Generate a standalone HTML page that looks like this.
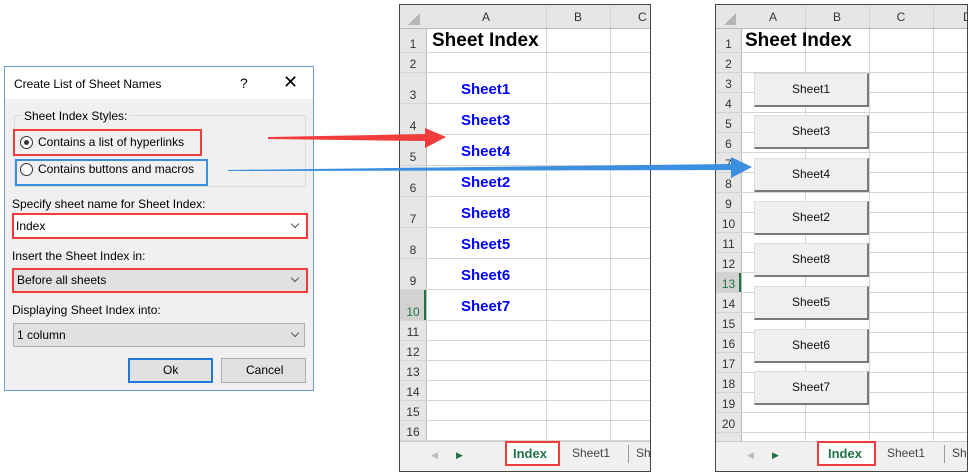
<!DOCTYPE html>
<html><head><meta charset="utf-8"><style>
*{margin:0;padding:0;box-sizing:border-box}
body{width:971px;height:476px;background:#fff;position:relative;overflow:hidden;font-family:"Liberation Sans",sans-serif}
.a{position:absolute}
.dlg{left:4px;top:66px;width:310px;height:325px;background:#f0f0f0;border:1px solid #6a9fd6}
.t{font-size:12px;color:#000;white-space:nowrap}
.red{border:2px solid #f03c3c}
.blue{border:2px solid #3b8ee0}
.chev{width:6px;height:6px;border-right:1px solid #555;border-bottom:1px solid #555;transform:rotate(45deg)}
.sheet{background:#fff;border:1px solid #444}
.hdr{background:#e6e6e6;color:#333;font-size:12px;text-align:center}
.gl{background:#d4d4d4}
.lnk{color:#0000ff;font-weight:bold;font-size:15px}
.btn{background:#efefef;border-right:2px solid #7a7a7a;border-bottom:2px solid #7a7a7a;border-top:1px solid #ddd;border-left:1px solid #ddd;font-size:12px;text-align:center;color:#111}
</style></head><body>

<!-- Dialog -->
<div class="a dlg">
 <div class="a" style="left:0;top:0;width:308px;height:32px;background:#fff"></div>
 <div class="a t" style="left:9px;top:10px;font-size:12px">Create List of Sheet Names</div>
 <div class="a t" style="left:235px;top:8px;font-size:14px">?</div>
 <div class="a t" style="left:278px;top:5px;font-size:18px">✕</div>
 <div class="a" style="left:9px;top:48px;width:292px;height:72px;border:1px solid #dcdcdc"></div>
 <div class="a t" style="left:17px;top:42px;background:#f0f0f0;padding:0 2px;font-size:12px">Sheet Index Styles:</div>
 <div class="a red" style="left:8px;top:62px;width:189px;height:27px"></div>
 <div class="a" style="left:15px;top:69px;width:13px;height:13px;border:1px solid #333;border-radius:50%;background:#fff"></div>
 <div class="a" style="left:19px;top:73px;width:5px;height:5px;border-radius:50%;background:#333"></div>
 <div class="a t" style="left:33px;top:68px">Contains a list of hyperlinks</div>
 <div class="a blue" style="left:10px;top:92px;width:193px;height:27px"></div>
 <div class="a" style="left:15px;top:96px;width:13px;height:13px;border:1px solid #333;border-radius:50%;background:#fff"></div>
 <div class="a t" style="left:33px;top:95px">Contains buttons and macros</div>
 <div class="a t" style="left:7px;top:130px">Specify sheet name for Sheet Index:</div>
 <div class="a red" style="left:7px;top:146px;width:296px;height:26px;background:#fff"></div>
 <div class="a t" style="left:11px;top:152px">Index</div>
 <div class="a chev" style="left:287px;top:154px"></div>
 <div class="a t" style="left:7px;top:182px">Insert the Sheet Index in:</div>
 <div class="a red" style="left:7px;top:201px;width:296px;height:25px;background:#e1e1e1"></div>
 <div class="a t" style="left:12px;top:206px">Before all sheets</div>
 <div class="a chev" style="left:287px;top:208px"></div>
 <div class="a t" style="left:7px;top:236px">Displaying Sheet Index into:</div>
 <div class="a" style="left:8px;top:256px;width:292px;height:24px;background:#e1e1e1;border:1px solid #adadad"></div>
 <div class="a t" style="left:12px;top:261px">1 column</div>
 <div class="a chev" style="left:287px;top:263px"></div>
 <div class="a" style="left:123px;top:291px;width:85px;height:25px;background:#e1e1e1;border:2px solid #1d7ad6"></div>
 <div class="a t" style="left:158px;top:296px">Ok</div>
 <div class="a" style="left:216px;top:291px;width:85px;height:25px;background:#e1e1e1;border:1px solid #adadad"></div>
 <div class="a t" style="left:241px;top:296px">Cancel</div>
</div>

<!-- Middle sheet -->
<div class="a sheet" style="left:399px;top:4px;width:252px;height:468px;overflow:hidden">
 <div class="a hdr" style="left:0;top:0;width:252px;height:24px"></div>
 <div class="a" style="left:8px;top:8px;width:0;height:0;border-left:12px solid transparent;border-bottom:12px solid #b5b5b5"></div>
 <div class="a hdr" style="left:26px;top:5px;width:120px">A</div>
 <div class="a hdr" style="left:146px;top:5px;width:64px">B</div>
 <div class="a hdr" style="left:210px;top:5px;width:42px;text-align:left;padding-left:28px">C</div>
 <div class="a" style="left:0;top:24px;width:26px;height:412px;background:#e6e6e6"></div>
 <div class="a" style="left:0;top:285px;width:26px;height:31px;background:#d2d2d2;border-right:2px solid #217346"></div>
 <div class="a" style="left:26px;top:24px;width:1px;height:412px;background:#bbb"></div>
 <div class="a gl" style="left:146px;top:0;width:1px;height:436px"></div>
 <div class="a gl" style="left:210px;top:0;width:1px;height:436px"></div>
 <div class="a" style="left:0;top:23px;width:252px;height:1px;background:#bbb"></div>
 <div id="m"></div>
 <div class="a t" style="left:32px;top:25px;font-size:19px;font-weight:bold">Sheet Index</div>
 <div class="a lnk" style="left:61px;top:76px">Sheet1</div>
 <div class="a lnk" style="left:61px;top:107px">Sheet3</div>
 <div class="a lnk" style="left:61px;top:138px">Sheet4</div>
 <div class="a lnk" style="left:61px;top:169px">Sheet2</div>
 <div class="a lnk" style="left:61px;top:200px">Sheet8</div>
 <div class="a lnk" style="left:61px;top:231px">Sheet5</div>
 <div class="a lnk" style="left:61px;top:262px">Sheet6</div>
 <div class="a lnk" style="left:61px;top:293px">Sheet7</div>
 <div class="a" style="left:0;top:436px;width:252px;height:32px;background:#f0f0f0;border-top:1px solid #ccc"></div>
 <div class="a t" style="left:31px;top:445px;color:#bbb;font-size:9px">◀</div>
 <div class="a t" style="left:56px;top:445px;color:#217346;font-size:9px">▶</div>
 <div class="a red" style="left:105px;top:436px;width:55px;height:25px;background:#fff"></div>
 <div class="a t" style="left:113px;top:441px;color:#217346;font-weight:bold;font-size:13px">Index</div>
 <div class="a t" style="left:172px;top:441px;color:#444;font-size:12px">Sheet1</div>
 <div class="a" style="left:228px;top:440px;width:1px;height:18px;background:#999"></div>
 <div class="a t" style="left:236px;top:441px;color:#444;font-size:12px">Sh</div>
</div>

<!-- Right sheet -->
<div class="a sheet" style="left:715px;top:4px;width:253px;height:468px;overflow:hidden">
 <div class="a" style="left:0;top:0;width:253px;height:24px;background:#e6e6e6"></div>
 <div class="a" style="left:8px;top:8px;width:0;height:0;border-left:12px solid transparent;border-bottom:12px solid #b5b5b5"></div>
 <div class="a hdr" style="left:25px;top:5px;width:64px">A</div>
 <div class="a hdr" style="left:89px;top:5px;width:64px">B</div>
 <div class="a hdr" style="left:153px;top:5px;width:64px">C</div>
 <div class="a hdr" style="left:217px;top:5px;width:36px;text-align:left;padding-left:30px">D</div>
 <div class="a" style="left:0;top:24px;width:25px;height:412px;background:#e6e6e6"></div>
 <div class="a" style="left:0;top:268px;width:25px;height:20px;background:#d2d2d2;border-right:2px solid #217346"></div>
 <div class="a" style="left:25px;top:24px;width:1px;height:412px;background:#bbb"></div>
 <div class="a gl" style="left:89px;top:0;width:1px;height:436px"></div>
 <div class="a gl" style="left:153px;top:0;width:1px;height:436px"></div>
 <div class="a gl" style="left:217px;top:0;width:1px;height:436px"></div>
 <div class="a" style="left:0;top:23px;width:253px;height:1px;background:#bbb"></div>
 <div id="r"></div>
 <div class="a t" style="left:29px;top:25px;font-size:19px;font-weight:bold">Sheet Index</div>
 <div class="a" style="left:0;top:436px;width:253px;height:32px;background:#f0f0f0;border-top:1px solid #ccc"></div>
 <div class="a t" style="left:31px;top:445px;color:#bbb;font-size:9px">◀</div>
 <div class="a t" style="left:56px;top:445px;color:#217346;font-size:9px">▶</div>
 <div class="a red" style="left:101px;top:436px;width:59px;height:25px;background:#fff"></div>
 <div class="a t" style="left:112px;top:441px;color:#217346;font-weight:bold;font-size:13px">Index</div>
 <div class="a t" style="left:171px;top:441px;color:#444;font-size:12px">Sheet1</div>
 <div class="a" style="left:228px;top:440px;width:1px;height:18px;background:#999"></div>
 <div class="a t" style="left:236px;top:441px;color:#444;font-size:12px">Sh</div>
</div>

<svg class="a" style="left:0;top:0" width="971" height="476">
 <polygon points="268,137 425,134 425,128 446,137 425,148 425,141 268,139" fill="#f03c3c"/>
 <polygon points="228,170 731,164 731,157 752,167 731,178 731,170 228,171" fill="#3b8ee0"/>
</svg>

<script>
(function(){
 var m=document.getElementById('m'),h='';
 var ys=[24,48,68,99,130,161,192,223,254,285,316,336,356,376,396,416,436];
 for(var i=1;i<ys.length;i++){
  h+='<div class="a gl" style="left:0;top:'+(ys[i]-1)+'px;width:252px;height:1px"></div>';
  if(i<=16)h+='<div class="a t" style="left:0;top:'+(ys[i]-16)+'px;width:26px;text-align:center;color:'+(i==10?'#217346':'#333')+'">'+i+'</div>';
 }
 m.outerHTML=h;
 var r=document.getElementById('r');h='';
 for(var j=1;j<=21;j++){
  var y=j==1?48:48+(j-1)*20;
  h+='<div class="a gl" style="left:0;top:'+(y-1)+'px;width:253px;height:1px"></div>';
  if(j<=20)h+='<div class="a t" style="left:0;top:'+(y-16)+'px;width:25px;text-align:center;color:'+(j==13?'#217346':'#333')+'">'+j+'</div>';
 }
 var by=[68,110,153,196,238,281,324,366],nm=['Sheet1','Sheet3','Sheet4','Sheet2','Sheet8','Sheet5','Sheet6','Sheet7'];
 for(var k=0;k<8;k++)h+='<div class="a btn" style="left:38px;top:'+by[k]+'px;width:115px;height:34px;line-height:31px">'+nm[k]+'</div>';
 r.outerHTML=h;
})();
</script>
</body></html>
